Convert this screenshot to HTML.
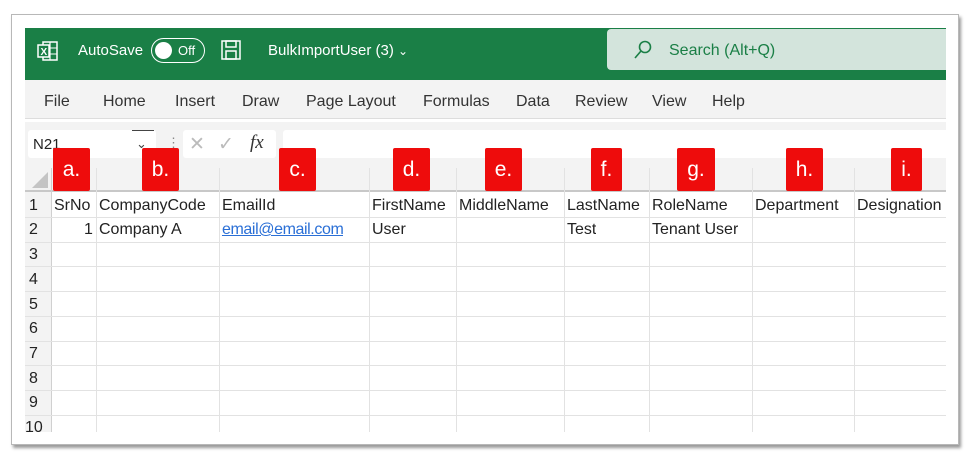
<!DOCTYPE html>
<html><head><meta charset="utf-8"><style>
*{margin:0;padding:0;box-sizing:border-box}
body{width:970px;height:457px;background:#fff;position:relative;overflow:hidden;font-family:"Liberation Sans",sans-serif}
.a{position:absolute}
.frame{left:11px;top:14px;width:948px;height:431px;border:1px solid #b8b8b8;box-shadow:2px 3px 3px #999;background:#fff}
.t{position:absolute;white-space:nowrap}
.lab{position:absolute;top:148px;height:43px;background:#ee0c0c;border-radius:2px;color:#fff;font-size:21px;text-align:center;line-height:44px}
.vl{position:absolute;width:1px;background:#e2e2e2}
.hl{position:absolute;height:1px;background:#e2e2e2;left:25px;width:921px}
.c{position:absolute;font-size:16px;color:#222;white-space:nowrap;overflow:hidden}
</style></head><body>
<div class="a frame"></div>
<div class="a" style="left:25px;top:28px;width:921px;height:52px;background:#1a7f46"></div>
<svg class="a" style="left:37px;top:40px" width="22" height="22" viewBox="0 0 22 22"><rect x="6" y="2" width="14" height="18" fill="none" stroke="#fff" stroke-width="1.5"/><line x1="13" y1="2" x2="13" y2="20" stroke="#fff" stroke-width="1.2"/><line x1="13" y1="8" x2="20" y2="8" stroke="#fff"/><line x1="13" y1="14" x2="20" y2="14" stroke="#fff"/><rect x="1" y="5" width="11" height="12" fill="#1a7f46" stroke="#fff" stroke-width="1.5"/><text x="3.5" y="15" fill="#fff" font-size="10" font-family="Liberation Sans" font-weight="bold">X</text></svg>
<div class="t" style="left:78px;top:42px;color:#fff;font-size:15px">AutoSave</div>
<div class="a" style="left:151px;top:38px;width:54px;height:25px;border:1.5px solid #fff;border-radius:13px"></div>
<div class="a" style="left:155px;top:42px;width:17px;height:17px;border-radius:50%;background:#fff"></div>
<div class="t" style="left:178px;top:43px;color:#fff;font-size:13px">Off</div>
<svg class="a" style="left:220px;top:39px" width="22" height="22" viewBox="0 0 22 22" fill="none" stroke="#fff" stroke-width="1.5"><rect x="2" y="2" width="18" height="18"/><rect x="6" y="2" width="10" height="6"/><rect x="6" y="12" width="10" height="8"/></svg>
<div class="t" style="left:268px;top:42px;color:#fff;font-size:15px">BulkImportUser (3) <span style="font-size:12px">&#8964;</span></div>
<div class="a" style="left:607px;top:29px;width:339px;height:41px;background:#d3e4dc;border-radius:4px 0 0 4px"></div>
<svg class="a" style="left:633px;top:39px" width="20" height="22" viewBox="0 0 20 22" fill="none" stroke="#1a7f46" stroke-width="1.6"><circle cx="12" cy="8" r="5.5"/><line x1="8" y1="12" x2="2" y2="19"/></svg>
<div class="t" style="left:669px;top:42px;color:#1a7f46;font-size:16px">Search (Alt+Q)</div>
<div class="a" style="left:25px;top:80px;width:921px;height:39px;background:#f3f3f3;border-bottom:1px solid #ddd"></div>
<div class="t" style="top:93px;left:44px;font-size:16px;color:#333">File</div>
<div class="t" style="top:93px;left:103px;font-size:16px;color:#333">Home</div>
<div class="t" style="top:93px;left:175px;font-size:16px;color:#333">Insert</div>
<div class="t" style="top:93px;left:242px;font-size:16px;color:#333">Draw</div>
<div class="t" style="top:93px;left:306px;font-size:16px;color:#333">Page Layout</div>
<div class="t" style="top:93px;left:423px;font-size:16px;color:#333">Formulas</div>
<div class="t" style="top:93px;left:516px;font-size:16px;color:#333">Data</div>
<div class="t" style="top:93px;left:575px;font-size:16px;color:#333">Review</div>
<div class="t" style="top:93px;left:652px;font-size:16px;color:#333">View</div>
<div class="t" style="top:93px;left:712px;font-size:16px;color:#333">Help</div>
<div class="a" style="left:25px;top:122px;width:921px;height:46px;background:#f3f3f3"></div>
<div class="a" style="left:28px;top:130px;width:128px;height:28px;background:#fff;border-radius:3px"></div>
<div class="t" style="left:33px;top:136px;font-size:15px;color:#222">N21</div>
<div class="t" style="left:136px;top:136px;font-size:13px;color:#444">&#8964;</div>
<div class="a" style="left:132px;top:130px;width:22px;height:1px;background:#444"></div>
<div class="t" style="left:167px;top:135px;font-size:13px;color:#888">&#8942;</div>
<div class="a" style="left:183px;top:130px;width:93px;height:28px;background:#fff;border-radius:3px"></div>
<div class="t" style="left:189px;top:133px;font-size:19px;color:#bbb">&#10005;</div>
<div class="t" style="left:218px;top:133px;font-size:19px;color:#bbb">&#10003;</div>
<div class="t" style="left:250px;top:132px;font-size:19px;color:#333;font-family:'Liberation Serif',serif;font-style:italic">fx</div>
<div class="a" style="left:283px;top:130px;width:663px;height:28px;background:#fff;border-radius:3px 0 0 3px"></div>
<div class="a" style="left:25px;top:168px;width:921px;height:24px;background:#f3f3f3;border-bottom:2px solid #c8c8c8"></div>
<div class="a" style="left:25px;top:192px;width:26px;height:240px;background:#f3f3f3"></div>
<svg class="a" style="left:32px;top:172px" width="16" height="16"><polygon points="16,0 16,16 0,16" fill="#c4c4c4"/></svg>
<div class="a" style="left:51px;top:168px;width:1px;height:264px;background:#d0d0d0"></div>
<div class="vl" style="left:96px;top:168px;height:264px"></div>
<div class="vl" style="left:219px;top:168px;height:264px"></div>
<div class="vl" style="left:369px;top:168px;height:264px"></div>
<div class="vl" style="left:456px;top:168px;height:264px"></div>
<div class="vl" style="left:564px;top:168px;height:264px"></div>
<div class="vl" style="left:649px;top:168px;height:264px"></div>
<div class="vl" style="left:752px;top:168px;height:264px"></div>
<div class="vl" style="left:854px;top:168px;height:264px"></div>
<div class="hl" style="top:217px"></div><div class="hl" style="top:242px"></div><div class="hl" style="top:266px"></div><div class="hl" style="top:291px"></div><div class="hl" style="top:316px"></div><div class="hl" style="top:341px"></div><div class="hl" style="top:365px"></div><div class="hl" style="top:390px"></div><div class="hl" style="top:415px"></div>
<div class="c" style="left:29px;top:197px">1</div><div class="c" style="left:29px;top:221px">2</div><div class="c" style="left:29px;top:246px">3</div><div class="c" style="left:29px;top:271px">4</div><div class="c" style="left:29px;top:296px">5</div><div class="c" style="left:29px;top:320px">6</div><div class="c" style="left:29px;top:345px">7</div><div class="c" style="left:29px;top:370px">8</div><div class="c" style="left:29px;top:394px">9</div><div class="c" style="left:25px;top:419px;height:13px">10</div>
<div class="c" style="left:54px;top:197px;width:42px">SrNo</div>
<div class="c" style="left:99px;top:197px">CompanyCode</div>
<div class="c" style="left:222px;top:197px">EmailId</div>
<div class="c" style="left:372px;top:197px">FirstName</div>
<div class="c" style="left:459px;top:197px">MiddleName</div>
<div class="c" style="left:567px;top:197px">LastName</div>
<div class="c" style="left:652px;top:197px">RoleName</div>
<div class="c" style="left:755px;top:197px">Department</div>
<div class="c" style="left:857px;top:197px;width:89px">Designation</div>
<div class="c" style="left:84px;top:221px">1</div>
<div class="c" style="left:99px;top:221px">Company A</div>
<div class="c" style="left:222px;top:221px;color:#2a6fd6;text-decoration:underline;letter-spacing:-0.4px">email@email.com</div>
<div class="c" style="left:372px;top:221px">User</div>
<div class="c" style="left:567px;top:221px">Test</div>
<div class="c" style="left:652px;top:221px">Tenant User</div>
<div class="lab" style="left:53px;width:37px">a.</div>
<div class="lab" style="left:142px;width:37px">b.</div>
<div class="lab" style="left:279px;width:37px">c.</div>
<div class="lab" style="left:393px;width:37px">d.</div>
<div class="lab" style="left:485px;width:37px">e.</div>
<div class="lab" style="left:591px;width:31px">f.</div>
<div class="lab" style="left:677px;width:38px">g.</div>
<div class="lab" style="left:786px;width:37px">h.</div>
<div class="lab" style="left:891px;width:31px">i.</div>
</body></html>
